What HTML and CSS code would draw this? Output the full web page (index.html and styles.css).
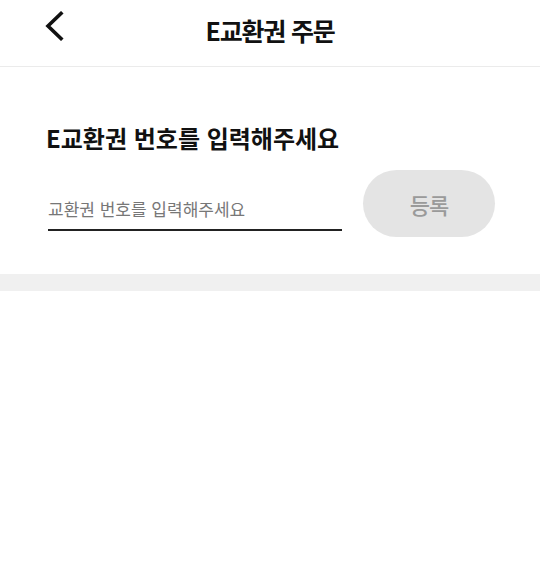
FILE: index.html
```html
<!DOCTYPE html>
<html lang="ko">
<head>
<meta charset="utf-8">
<title>E교환권 주문</title>
<link rel="stylesheet" href="styles.css">
</head>
<body>
<header class="topbar">
  <button class="back" aria-label="뒤로">
    <svg width="20" height="30" viewBox="0 0 20 30"><path d="M17 2.5 L4 15 L17 27.5" fill="none" stroke="#111" stroke-width="3.6" stroke-linecap="square"/></svg>
  </button>
  <h1 class="title">E교환권 주문</h1>
</header>
<main class="panel">
  <h2 class="heading">E교환권 번호를 입력해주세요</h2>
  <div class="form-row">
    <input class="code-input" type="text" placeholder="교환권 번호를 입력해주세요">
    <button class="submit" disabled>등록</button>
  </div>
</main>
<div class="divider"></div>
</body>
</html>
```
FILE: styles.css
```css
html, body { margin: 0; padding: 0; background: #fff; }
body { font-family: "Noto Sans CJK KR", "Noto Sans", sans-serif; color: #111; }
.topbar {
  height: 66px;
  border-bottom: 1px solid #ebebeb;
  display: flex;
  align-items: center;
  justify-content: center;
  position: relative;
}
.back {
  position: absolute;
  left: 44px;
  top: 11px;
  padding: 0;
  border: 0;
  background: none;
  display: flex;
}
.title {
  margin: 0 0 6px 0;
  font-size: 25px;
  font-weight: 700;
  letter-spacing: -1.2px;
  line-height: 1;
}
.panel {
  padding: 55px 45px 37px 46px;
}
.heading {
  margin: 0;
  font-size: 24px;
  font-weight: 700;
  letter-spacing: 0;
  line-height: 32px;
}
.form-row {
  display: flex;
  align-items: flex-start;
  gap: 21px;
  margin-top: 16px;
}
.code-input {
  width: 294px;
  height: 38px;
  margin-left: 2px;
  margin-top: 23px;
  box-sizing: border-box;
  border: 0;
  border-bottom: 2px solid #222;
  padding: 0 0 5px 0;
  font-family: inherit;
  font-size: 17px;
  letter-spacing: 0;
  color: #111;
  outline: none;
  background: transparent;
}
.code-input::placeholder { color: #777; }
.submit {
  width: 132px;
  height: 67px;
  border-radius: 34px;
  border: 0;
  background: #e4e4e4;
  color: #9a9a9a;
  font-family: inherit;
  font-size: 22px;
  font-weight: 500;
  letter-spacing: -1px;
}
.divider {
  height: 17px;
  background: #f0f0f0;
}
```
